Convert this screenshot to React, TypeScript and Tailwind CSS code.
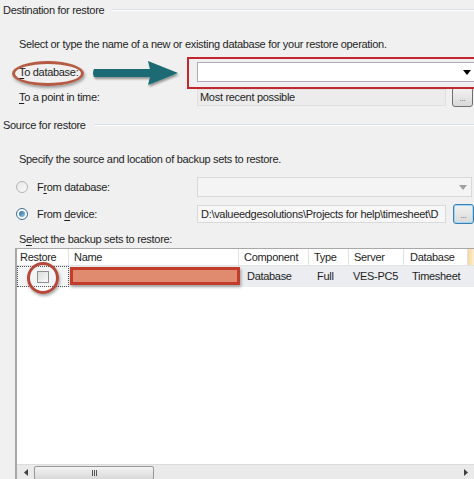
import React from 'react';

const font = { fontFamily: '"Liberation Sans", Arial, sans-serif' };

function GroupTitle({ title }: { title: string }) {
  return (
    <div className="flex items-center h-[20px] pl-[3px]">
      <span className="text-[#1e1e1e] pr-[8px]">{title}</span>
      <div className="flex-1 border-t border-[#d5dfe5] border-b-white border-b h-0" />
    </div>
  );
}

function Ellipsis({ focused }: { focused?: boolean }) {
  return (
    <div
      className={
        'w-[21px] h-[20px] rounded-[3px] border flex items-end justify-center pb-[3px] text-[8px] leading-none text-[#555] bg-gradient-to-b from-[#f2f2f2] to-[#d9d9d9] ' +
        (focused ? 'border-[#3c7fb1] shadow-[inset_0_0_0_1px_#9fd5f5]' : 'border-[#707070]')
      }
    >
      ...
    </div>
  );
}

function DropArrow({ color }: { color: string }) {
  return (
    <svg width="8" height="5" viewBox="0 0 8 5">
      <path d="M0 0 L8 0 L4 5 Z" fill={color} />
    </svg>
  );
}

export default function App() {
  return (
    <div
      className="relative w-[474px] h-[479px] bg-[#f0f0f0] overflow-hidden text-[11px] tracking-[-0.3px] text-[#1e1e1e]"
      style={font}
    >
      <GroupTitle title="Destination for restore" />

      <div className="pl-[19px] mt-[16px] h-[16px] leading-[16px]">
        Select or type the name of a new or existing database for your restore operation.
      </div>

      {/* To database */}
      <div className="flex items-center mt-[10px] h-[20px]">
        <div className="w-[197px] pl-[19px]">
          <span className="underline underline-offset-2">T</span>o database:
        </div>
        <div className="flex-1 h-[20px] bg-white border border-[#abadb3] flex items-center justify-end pr-[4px] -mr-[2px]">
          <DropArrow color="#000" />
        </div>
      </div>

      {/* Point in time */}
      <div className="flex items-center mt-[5px] h-[20px]">
        <div className="w-[197px] pl-[19px]">
          <span className="underline underline-offset-2">T</span>o a point in time:
        </div>
        <div className="w-[249px] h-[17px] bg-[#ececec] border border-[#e0e0e0] flex items-center pl-[2px] leading-none">
          Most recent possible
        </div>
        <div className="ml-[6px]">
          <Ellipsis />
        </div>
      </div>

      <div className="mt-[8px]">
        <GroupTitle title="Source for restore" />
      </div>

      <div className="pl-[19px] mt-[16px] h-[16px] leading-[16px]">
        Specify the source and location of backup sets to restore.
      </div>

      {/* From database */}
      <div className="flex items-center mt-[10px] h-[20px]">
        <div className="w-[197px] pl-[16px] flex items-center gap-[9px]">
          <div className="w-[12px] h-[12px] rounded-full border border-[#b5b5b5] bg-gradient-to-br from-[#e6e6e6] to-[#fafafa]" />
          <span>
            F<span className="underline underline-offset-2">r</span>om database:
          </span>
        </div>
        <div className="w-[275px] h-[20px] bg-[#f4f4f4] border border-[#d9d9d9] flex items-center justify-end pr-[4px]">
          <DropArrow color="#a0a0a0" />
        </div>
      </div>

      {/* From device */}
      <div className="flex items-center mt-[7px] h-[20px]">
        <div className="w-[197px] pl-[16px] flex items-center gap-[9px]">
          <div className="w-[12px] h-[12px] rounded-full border border-[#3b6e9a] bg-white flex items-center justify-center">
            <div className="w-[6px] h-[6px] rounded-full bg-gradient-to-br from-[#2b6aa8] to-[#8ec4ee]" />
          </div>
          <span>
            From <span className="underline underline-offset-2">d</span>evice:
          </span>
        </div>
        <div className="w-[249px] h-[18px] bg-[#f7f7f7] border border-[#d9d9d9] flex items-center pl-[3px] leading-none whitespace-nowrap overflow-hidden">
          D:\valueedgesolutions\Projects for help\timesheet\D
        </div>
        <div className="ml-[7px]">
          <Ellipsis focused />
        </div>
      </div>

      <div className="pl-[19px] mt-[7px] h-[16px] leading-[16px]">
        S<span className="underline underline-offset-2">e</span>lect the backup sets to restore:
      </div>

      {/* Grid */}
      <div className="ml-[15px] mt-[1px] h-[232px] bg-white border-l-2 border-t border-[#a8a8a8] flex flex-col">
        <div className="flex h-[17px] border-b border-[#e3e3e3] items-center whitespace-nowrap">
          <div className="w-[52px] pl-[3px] border-r border-[#e3e3e3] h-full flex items-center">Restore</div>
          <div className="w-[170px] pl-[5px] border-r border-[#e3e3e3] h-full flex items-center">Name</div>
          <div className="w-[70px] pl-[5px] border-r border-[#e3e3e3] h-full flex items-center">Component</div>
          <div className="w-[40px] pl-[5px] border-r border-[#e3e3e3] h-full flex items-center">Type</div>
          <div className="w-[55px] pl-[5px] border-r border-[#e3e3e3] h-full flex items-center">Server</div>
          <div className="w-[64px] pl-[6px] border-r border-[#e3e3e3] h-full flex items-center">Database</div>
          <div className="flex-1 h-full bg-gradient-to-r from-[#f6d89c] to-[#fbeed2]" />
        </div>
        <div className="flex h-[21px] items-center bg-[#ebedf0] whitespace-nowrap">
          <div className="w-[52px] h-full border border-dotted border-[#555] bg-[#f3f4f6] flex items-center justify-center">
            <div className="w-[12px] h-[12px] border border-[#8f8f8f] bg-gradient-to-br from-[#dcdcdc] to-[#fafafa]" />
          </div>
          <div className="w-[170px]" />
          <div className="w-[70px] pl-[8px]">Database</div>
          <div className="w-[40px] pl-[8px]">Full</div>
          <div className="w-[55px] pl-[4px]">VES-PC5</div>
          <div className="w-[64px] pl-[8px]">Timesheet</div>
        </div>
        <div className="flex-1" />
        {/* horizontal scrollbar */}
        <div className="h-[16px] bg-[#eaeaea] border-t border-[#dcdcdc] flex items-center">
          <div className="w-[17px] flex justify-center">
            <svg width="4" height="7" viewBox="0 0 4 7"><path d="M4 0 L0 3.5 L4 7 Z" fill="#404040" /></svg>
          </div>
          <div className="w-[120px] h-[14px] rounded-[2px] border border-[#979797] bg-gradient-to-b from-[#f3f3f3] to-[#d8d8d8] flex items-center justify-center gap-[1px]">
            <div className="w-[1px] h-[6px] bg-[#555]" />
            <div className="w-[1px] h-[6px] bg-[#555]" />
            <div className="w-[1px] h-[6px] bg-[#555]" />
          </div>
          <div className="flex-1" />
          <div className="w-[17px] flex justify-center">
            <svg width="4" height="7" viewBox="0 0 4 7"><path d="M0 0 L4 3.5 L0 7 Z" fill="#404040" /></svg>
          </div>
        </div>
      </div>

      {/* annotations */}
      <div className="absolute left-[187px] top-[57px] w-[300px] h-[32px] border-2 border-[#c1272d]" />
      <div className="absolute left-[12px] top-[61px] w-[72px] h-[25px] rounded-[50%] border-[3px] border-[#b55a43] shadow-[1px_2px_3px_rgba(0,0,0,0.35)]" />
      <svg className="absolute left-[90px] top-[60px]" width="94" height="28" viewBox="0 0 94 28">
        <defs>
          <filter id="sh" x="-10%" y="-20%" width="130%" height="160%">
            <feDropShadow dx="1" dy="2" stdDeviation="1.2" floodOpacity="0.4" />
          </filter>
        </defs>
        <path d="M4 9 Q2 13 4 17 L60 17 L58 25 L88 13 L58 1 L60 9 Z" fill="#1d6b73" filter="url(#sh)" />
      </svg>
      <div className="absolute left-[27px] top-[262px] w-[32px] h-[32px] rounded-full border-[3px] border-[#b5483a] shadow-[1px_2px_3px_rgba(0,0,0,0.35)]" />
      <div className="absolute left-[70px] top-[267px] w-[170px] h-[18px] bg-[#e08a70] border-[3px] border-[#c13c2a] shadow-[1px_2px_3px_rgba(0,0,0,0.35)]" />
    </div>
  );
}
